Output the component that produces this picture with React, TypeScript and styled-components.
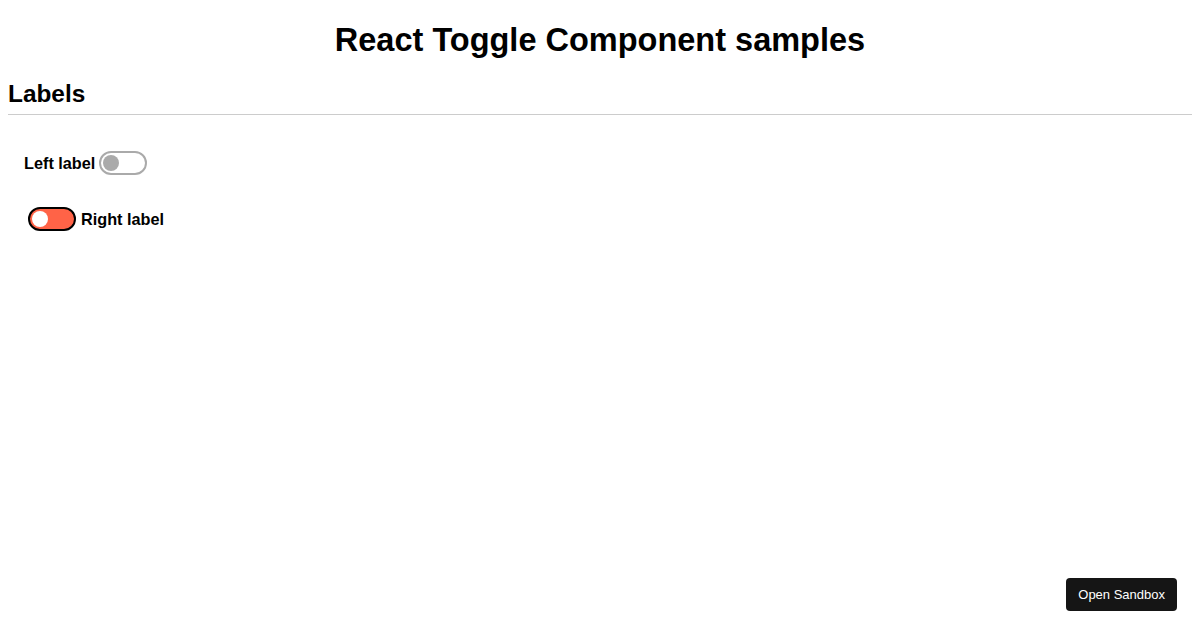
import React, { useState } from "react"
import styled, { createGlobalStyle } from "styled-components"

const GlobalStyle = createGlobalStyle`
  body {
    margin: 8px;
    font-family: "Liberation Sans", Arial, sans-serif;
    color: #000;
    background: #fff;
  }
`

const Title = styled.h1`
  font-size: 32.5px;
  font-weight: bold;
  text-align: center;
  margin: 14px 0 21px;
`

const SectionTitle = styled.h2`
  font-size: 24.4px;
  font-weight: bold;
  margin: 20px 0 0;
  padding-bottom: 6px;
  border-bottom: 1px solid #ccc;
`

const Samples = styled.div`
  display: flex;
  flex-direction: column;
  align-items: flex-start;
  gap: 32px;
  padding: 36px 16px;
`

const Row = styled.label`
  display: flex;
  align-items: center;
  font-size: 16.25px;
  font-weight: bold;
  cursor: pointer;
`

const Track = styled.span<{ $on: boolean }>`
  position: relative;
  display: inline-block;
  box-sizing: border-box;
  width: 48px;
  height: 24px;
  margin: 0 5px 0 4px;
  border-radius: 12px;
  border: 2px solid ${p => (p.$on ? "#000" : "#aaa")};
  background: ${p => (p.$on ? "#ff6347" : "#fff")};
`

const Knob = styled.span<{ $on: boolean }>`
  position: absolute;
  top: 2px;
  left: 2px;
  width: 16px;
  height: 16px;
  border-radius: 50%;
  background: ${p => (p.$on ? "#fff" : "#aaa")};
`

const HiddenInput = styled.input`
  display: none;
`

const SandboxButton = styled.button`
  position: fixed;
  right: 23px;
  bottom: 19px;
  height: 33px;
  padding: 0 12px;
  border: none;
  border-radius: 4px;
  background: #151515;
  color: #fff;
  font-family: "Liberation Sans", Arial, sans-serif;
  font-size: 13px;
  cursor: pointer;
`

type ToggleProps = {
  label: string
  labelSide: "left" | "right"
  initial: boolean
}

const Toggle = ({ label, labelSide, initial }: ToggleProps) => {
  const [on, setOn] = useState(initial)
  return (
    <Row>
      {labelSide === "left" && label}
      <HiddenInput type="checkbox" checked={on} onChange={() => setOn(!on)} />
      <Track $on={on}>
        <Knob $on={on} />
      </Track>
      {labelSide === "right" && label}
    </Row>
  )
}

const App = () => {
  return (
    <>
      <GlobalStyle />
      <Title>React Toggle Component samples</Title>
      <SectionTitle>Labels</SectionTitle>
      <Samples>
        <Toggle label="Left label" labelSide="left" initial={false} />
        <Toggle label="Right label" labelSide="right" initial={true} />
      </Samples>
      <SandboxButton>Open Sandbox</SandboxButton>
    </>
  )
}

export default App
